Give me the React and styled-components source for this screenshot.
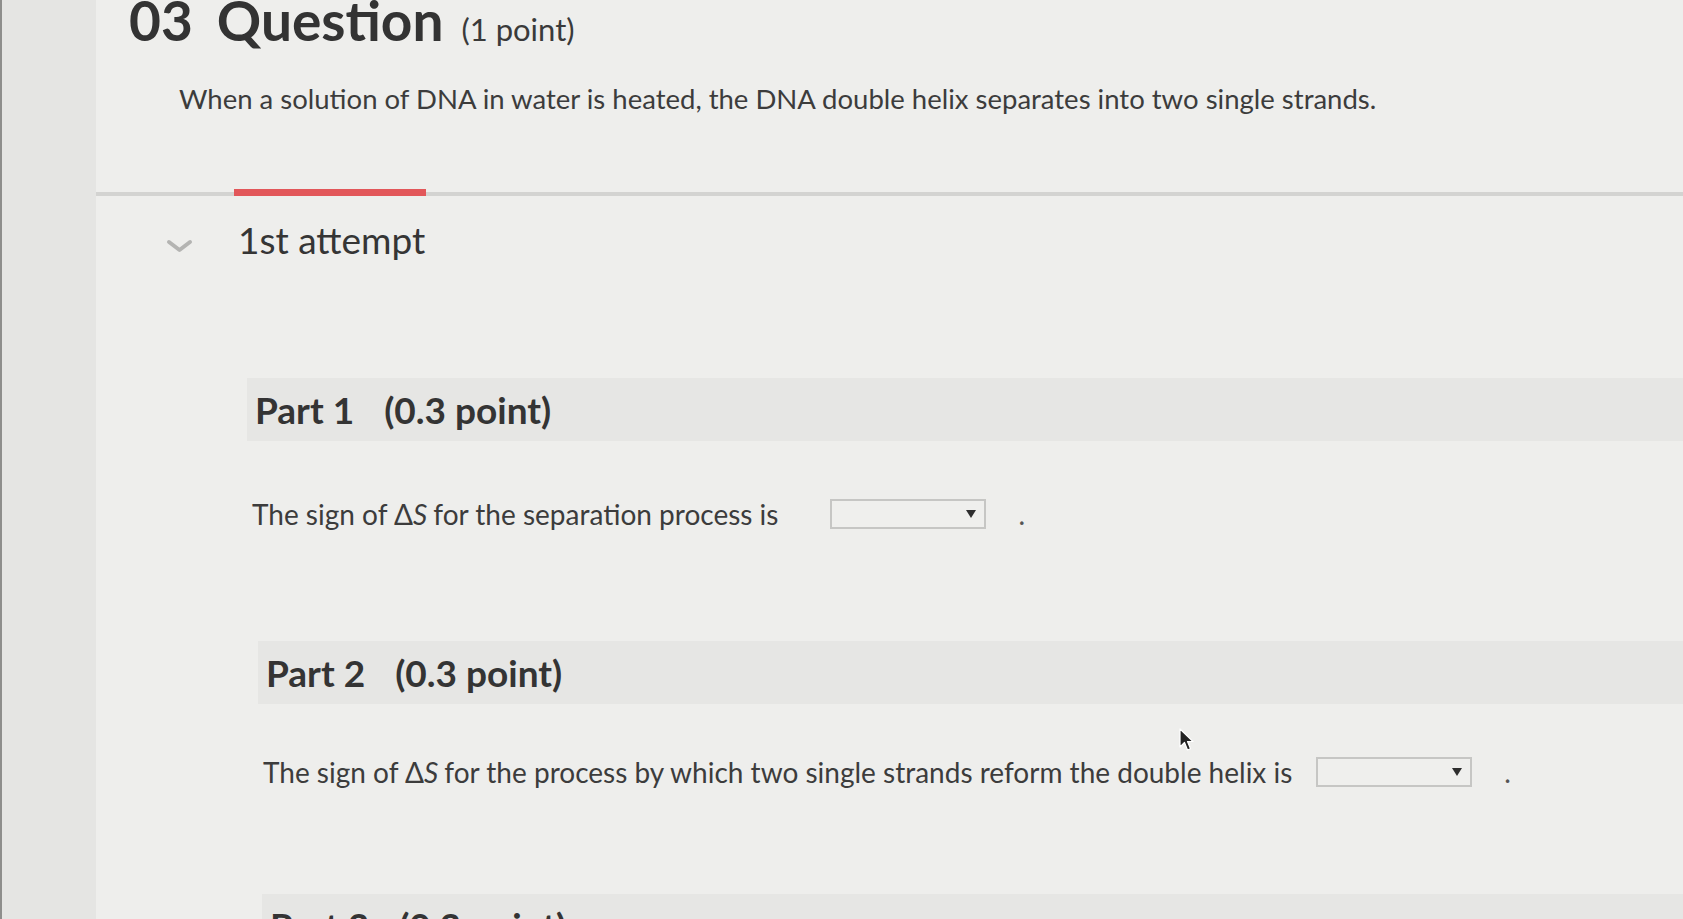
import React from "react";
import styled, { createGlobalStyle } from "styled-components";

const Global = createGlobalStyle`
  html, body { margin: 0; padding: 0; }
  body {
    background: #e6e6e4;
    font-family: Lato, "Open Sans", "Liberation Sans", sans-serif;
    color: #3a3a3a;
    overflow: hidden;
  }
`;

const Page = styled.div`
  display: flex;
  height: 919px;
  overflow: hidden;
  position: relative;
`;

const Sidebar = styled.aside`
  width: 96px;
  flex: none;
  background: #e5e5e3;
  border-left: 2px solid #8e8e8c;
  box-sizing: border-box;
`;

const Main = styled.main`
  flex: 1;
  background: #eeeeec;
  display: flex;
  flex-direction: column;
  min-width: 0;
`;

const Header = styled.header`
  padding-left: 33px;
`;

const Title = styled.h1`
  margin: -7px 0 0;
  font-size: 55px;
  line-height: 55px;
  font-weight: 700;
  color: #333;
  display: flex;
  align-items: baseline;
  white-space: nowrap;
`;

const Number = styled.span`
  margin-right: 24px;
`;

const Points = styled.span`
  font-size: 31px;
  font-weight: 400;
  margin-left: 18px;
  color: #3a3a3a;
`;

const Prompt = styled.p`
  margin: 26px 0 0 83px;
  font-size: 27.5px;
  line-height: 32px;
  white-space: nowrap;
  color: #3c3c3c;
`;

const TabTrack = styled.div`
  margin-top: 77px;
  height: 6px;
  background: #d3d3d1;
  display: flex;
  align-items: flex-start;
  padding-left: 138px;
`;

const Tab = styled.div`
  width: 192px;
  height: 7px;
  margin-top: -3px;
  flex: none;
  background: #e2575a;
`;

const AttemptRow = styled.div`
  margin-top: 22px;
  padding-left: 70px;
  display: flex;
  align-items: center;
  gap: 45px;
`;

const Chevron = styled.svg`
  width: 27px;
  height: 14px;
  flex: none;
  margin-top: 12px;
`;

const AttemptLabel = styled.span`
  font-size: 37px;
  line-height: 44px;
  color: #353535;
`;

const Section = styled.section`
  margin-top: ${(p) => p.$gap}px;
  padding-left: ${(p) => p.$indent}px;
`;

const PartBand = styled.div`
  height: 63px;
  background: #e6e6e4;
  display: flex;
  align-items: center;
  padding-left: 8px;
  gap: 30px;
  font-size: 37px;
  font-weight: 700;
  color: #343434;
  white-space: nowrap;
`;

const Sentence = styled.div`
  margin-top: ${(p) => p.$gap}px;
  padding-left: 5px;
  display: flex;
  align-items: center;
  font-size: 28px;
  line-height: 32px;
  color: #3c3c3c;
  white-space: nowrap;
`;

const Symbol = styled.i`
  font-style: italic;
  margin-right: 6px;
`;

const Select = styled.div`
  margin-left: ${(p) => p.$gap}px;
  width: 156px;
  height: 30px;
  box-sizing: border-box;
  border: 2px solid #c6c6c4;
  background: #efefed;
  display: flex;
  align-items: center;
  justify-content: flex-end;
  padding-right: 8px;
`;

const Caret = styled.span`
  width: 0;
  height: 0;
  border-left: 5px solid transparent;
  border-right: 5px solid transparent;
  border-top: 8px solid #2e2e2e;
`;

const Dot = styled.span`
  margin-left: 32px;
  color: #555;
`;

const Pointer = styled.svg`
  position: absolute;
  left: 1178px;
  top: 728px;
  width: 16px;
  height: 24px;
`;

const parts = [
  {
    id: 1,
    gap: 116,
    indent: 151,
    sentenceGap: 57,
    text: "for the separation process is",
    selectGap: 52,
  },
  {
    id: 2,
    gap: 111,
    indent: 162,
    sentenceGap: 52,
    text: "for the process by which two single strands reform the double helix is",
    selectGap: 24,
  },
  { id: 3, gap: 106, indent: 166 },
];

export default function App() {
  return (
    <>
      <Global />
      <Page>
        <Sidebar />
        <Main>
          <Header>
            <Title>
              <Number>03</Number>Question<Points>(1 point)</Points>
            </Title>
          </Header>
          <Prompt>
            When a solution of DNA in water is heated, the DNA double helix
            separates into two single strands.
          </Prompt>
          <TabTrack>
            <Tab />
          </TabTrack>
          <AttemptRow>
            <Chevron viewBox="0 0 27 14">
              <path
                d="M3 3 L13.5 11 L24 3"
                fill="none"
                stroke="#b4b4b2"
                strokeWidth="4"
                strokeLinecap="round"
                strokeLinejoin="round"
              />
            </Chevron>
            <AttemptLabel>1st attempt</AttemptLabel>
          </AttemptRow>
          {parts.map((p) => (
            <Section key={p.id} $gap={p.gap} $indent={p.indent}>
              <PartBand>
                <span>Part {p.id}</span>
                <span>(0.3 point)</span>
              </PartBand>
              {p.text && (
                <Sentence $gap={p.sentenceGap}>
                  The sign of Δ<Symbol>S</Symbol>
                  {p.text}
                  <Select $gap={p.selectGap}>
                    <Caret />
                  </Select>
                  <Dot>.</Dot>
                </Sentence>
              )}
            </Section>
          ))}
        </Main>
        <Pointer viewBox="0 0 16 24">
          <path
            d="M2 1 L2 19 L6.5 14.5 L9.5 22 L12.5 20.8 L9.5 13.5 L15 13.5 Z"
            fill="#222"
            stroke="#fff"
            strokeWidth="1.2"
            strokeLinejoin="round"
          />
        </Pointer>
      </Page>
    </>
  );
}
